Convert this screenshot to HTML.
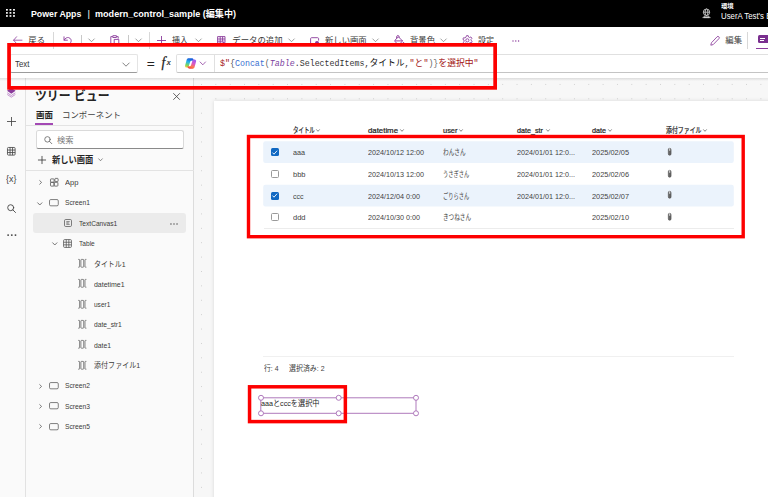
<!DOCTYPE html>
<html lang="ja">
<head>
<meta charset="utf-8">
<title>Power Apps</title>
<style>
*{box-sizing:border-box;margin:0;padding:0}
html,body{width:768px;height:497px;overflow:hidden;background:#fff}
body{font-family:"Liberation Sans","Noto Sans CJK JP",sans-serif;color:#333;position:relative;font-size:8px}
.a{position:absolute}
.t{position:absolute;white-space:nowrap;transform-origin:0 50%}
#topbar{left:0;top:0;width:768px;height:27px;background:#000}
#cmd{left:0;top:27px;width:768px;height:28px;background:#fff;border-bottom:1px solid #e9e9e9}
#fbar{left:0;top:54px;width:768px;height:24.2px;background:#fff}
#rail{left:0;top:78px;width:26px;height:419px;background:#fafafa;border-right:1px solid #e2e2e2}
#tree{left:26px;top:78px;width:168px;height:419px;background:#fafafa;border-right:1px solid #dcdcdc}
#stage{left:194px;top:78px;width:574px;height:419px;background-color:#f7f7f7;
 background-image:radial-gradient(circle,#cfcfcf 0.55px,rgba(207,207,207,0) 0.9px);background-size:14.35px 14.4px;background-position:0.3px -0.8px}
#canvas{left:214px;top:101px;width:560px;height:400px;background:#fff;box-shadow:0 0 4px rgba(0,0,0,.13)}
.red{border:3.9px solid #fb0007;position:absolute}
.sep{position:absolute;width:1px;background:#d8d8d8}
.hl{position:absolute;height:1px;background:#e3e3e3}
svg{position:absolute;overflow:visible}
.rowbg{position:absolute;left:263.2px;width:470.6px;background:#ebf3fc;border-radius:2px}
.cb{position:absolute;width:8.2px;height:8.2px;border-radius:1.5px}
.cb.on{background:#1068c2}
.cb.off{border:0.85px solid #9a9a9a;background:#fff}
</style>
</head>
<body>
<div id="topbar" class="a"></div>
<div id="cmd" class="a"></div>
<div id="fbar" class="a"></div>
<div id="rail" class="a"></div>
<div id="tree" class="a"></div>
<div id="stage" class="a"></div>
<div class="a" style="left:0;top:78.2px;width:768px;height:2.600px;background:linear-gradient(rgba(0,0,0,.11),rgba(0,0,0,0))"></div>
<div id="canvas" class="a"></div>

<!-- top bar icons -->
<svg style="left:6.2px;top:9.2px" width="9" height="7.800" viewBox="0 0 8.4 7.6" preserveAspectRatio="none"><g fill="#fff">
<rect x="0" y="0" width="1.7" height="1.6"/><rect x="3.3" y="0" width="1.7" height="1.6"/><rect x="6.6" y="0" width="1.7" height="1.6"/>
<rect x="0" y="3" width="1.7" height="1.6"/><rect x="3.3" y="3" width="1.7" height="1.6"/><rect x="6.6" y="3" width="1.7" height="1.6"/>
<rect x="0" y="6" width="1.7" height="1.6"/><rect x="3.3" y="6" width="1.7" height="1.6"/><rect x="6.6" y="6" width="1.7" height="1.6"/></g></svg>
<svg style="left:701px;top:8px" width="11" height="11" viewBox="0 0 11 11" fill="none" stroke="#ddd" stroke-width="0.8">
<circle cx="5.5" cy="4.2" r="3.2"/><ellipse cx="5.5" cy="4.2" rx="1.4" ry="3.2"/><path d="M2.3 4.2h6.4M1.5 9.6h8M3 8.2h5v1.4H3z"/></svg>

<!-- command bar icons -->
<svg style="left:12.7px;top:36.3px" width="9.4" height="8.4" viewBox="0 0 12 9" preserveAspectRatio="none" fill="none" stroke="#8a3a9b" stroke-width="0.9" stroke-linecap="round" stroke-linejoin="round"><path d="M11.5 4.5H0.8M4.6 0.8L0.8 4.5l3.8 3.7"/></svg>
<div class="sep" style="left:53px;top:32px;height:17px"></div>
<svg style="left:63px;top:35.5px" width="9" height="9" viewBox="0 0 9 9" fill="none" stroke="#8a3a9b" stroke-width="0.9" stroke-linecap="round" stroke-linejoin="round"><path d="M1 0.8v3.4h3.4M1.2 4C2.2 2.2 4 1.2 5.6 1.6c2 .5 3 2.4 2.4 4.2C7.6 7 6.6 7.9 5 8.5"/></svg>
<div class="sep" style="left:81px;top:35px;height:11px;background:#c8c8c8"></div>
<svg style="left:87.5px;top:37.6px" width="7" height="4.4" viewBox="0 0 8 5" fill="none" stroke="#777" stroke-width="0.8"><path d="M0.5 0.7L4 4.2 7.5 0.7"/></svg>
<svg style="left:110px;top:35px" width="9.5" height="11" viewBox="0 0 9.5 11" fill="none" stroke="#8a3a9b" stroke-width="0.9" stroke-linejoin="round"><path d="M2.6 1.6H0.8v8.6h3M6.6 1.6h1.6v2M2.8 0.7h3.6v1.8H2.8zM4.2 4.4h4.6v6H4.2z"/></svg>
<div class="sep" style="left:128px;top:35px;height:11px;background:#c8c8c8"></div>
<svg style="left:134.5px;top:37.6px" width="7" height="4.4" viewBox="0 0 8 5" fill="none" stroke="#777" stroke-width="0.8"><path d="M0.5 0.7L4 4.2 7.5 0.7"/></svg>
<div class="sep" style="left:149px;top:32px;height:17px"></div>
<svg style="left:157px;top:36px" width="9" height="9" viewBox="0 0 9 9" fill="none" stroke="#8a3a9b" stroke-width="0.9" stroke-linecap="round"><path d="M4.5 0.4v8.2M0.4 4.5h8.2"/></svg>
<svg style="left:194.5px;top:37.6px" width="7" height="4.4" viewBox="0 0 8 5" fill="none" stroke="#777" stroke-width="0.8"><path d="M0.5 0.7L4 4.2 7.5 0.7"/></svg>
<svg style="left:217.2px;top:35.6px" width="9" height="10" viewBox="0 0 9 10" fill="none" stroke="#8a3a9b" stroke-width="0.9" stroke-linejoin="round"><path d="M0.6 0.6h7.4v6.6H0.6zM0.6 3h7.400M0.600 5.200h7.400M3.200 0.600v6.600M5.600 0.600v6.600"/><circle cx="6.800" cy="7.600" r="2" fill="#8a3a9b" stroke="#fff" stroke-width="0.600"/></svg>
<svg style="left:287.8px;top:37.6px" width="7" height="4.4" viewBox="0 0 8 5" fill="none" stroke="#777" stroke-width="0.8"><path d="M0.5 0.7L4 4.2 7.5 0.7"/></svg>
<svg style="left:310.3px;top:36.5px" width="9.5" height="8.5" viewBox="0 0 9.5 8.5" fill="none" stroke="#8a3a9b" stroke-width="0.9" stroke-linejoin="round"><path d="M8.6 3.6V1.6c0-.5-.4-.9-.9-.9H1.5c-.5 0-.9.4-.9.9v4.6c0 .5.4.9.9.9h3"/><circle cx="7" cy="6" r="2" fill="#8a3a9b" stroke="none"/></svg>
<svg style="left:372px;top:37.6px" width="7" height="4.4" viewBox="0 0 8 5" fill="none" stroke="#777" stroke-width="0.8"><path d="M0.5 0.7L4 4.2 7.5 0.7"/></svg>
<svg style="left:393.5px;top:34.8px" width="10.500" height="10.500" viewBox="0 0 10.500 10.500" fill="none" stroke="#8a3a9b" stroke-width="0.900" stroke-linejoin="round"><path d="M4.400 1.800L8.600 6 5.400 9.200c-.5.500-1.200.5-1.700 0L1.200 6.700c-.5-.5-.5-1.200 0-1.700zM2.600 3.600V1.900c0-.8.600-1.400 1.300-1.400s1.300.6 1.300 1.400v.8M1 5.900h7.500M9.500 7.200c.5.800.7 1.200.7 1.700a.8.800 0 01-1.500 0c0-.5.300-.9.800-1.700z"/></svg>
<svg style="left:440.3px;top:37.6px" width="7" height="4.4" viewBox="0 0 8 5" fill="none" stroke="#777" stroke-width="0.8"><path d="M0.5 0.7L4 4.2 7.5 0.7"/></svg>
<svg style="left:461.9px;top:35px" width="10.700" height="10.700" viewBox="0 0 10 10" fill="none" stroke="#8a3a9b" stroke-width="0.9" stroke-linejoin="round"><circle cx="5" cy="5" r="1.5" stroke-width="0.8"/><path stroke-width="0.8" d="M4.2 0.6h1.6l.3 1.3 1 .5 1.2-.6 1 1.3-.9 1 .1 1 1 .8-.7 1.5-1.3-.3-.8.7-.1 1.3H4.9l-.5-1.2-1-.4-1.2.6-1-1.3.8-1-.1-1.1-1.1-.7.7-1.5 1.3.3.9-.7z"/></svg>
<svg style="left:512px;top:39.6px" width="8" height="2" viewBox="0 0 8 2" fill="#8a3a9b"><circle cx="1" cy="1" r="0.7"/><circle cx="3.8" cy="1" r="0.7"/><circle cx="6.6" cy="1" r="0.7"/></svg>
<svg style="left:710.3px;top:35.5px" width="10" height="10" viewBox="0 0 10 10" fill="none" stroke="#8a3a9b" stroke-width="0.85" stroke-linejoin="round"><path d="M7 0.9a1.2 1.2 0 011.9 0 1.2 1.2 0 010 1.8L3.2 8.6 0.8 9.2l.6-2.4z"/></svg>
<div class="sep" style="left:746.8px;top:32px;height:17px"></div>
<div class="a" style="left:757.7px;top:35px;width:12px;height:8.4px;background:#7a2f8f;border-radius:1.5px"></div>
<div class="a" style="left:760px;top:37.6px;width:5px;height:1px;background:#fff"></div>
<div class="a" style="left:760px;top:39.8px;width:3.5px;height:1px;background:#fff"></div>
<div class="a" style="left:756.3px;top:47.6px;width:12px;height:1.5px;background:#8a3a9b"></div>

<!-- formula bar -->
<div class="a" style="left:9.5px;top:54.2px;width:128.2px;height:18.6px;border:1px solid #e4e4e4;border-bottom:1px solid #9c9c9c;border-radius:2px;background:#fff"></div>
<svg style="left:121.7px;top:61.5px" width="8" height="5" viewBox="0 0 8 5" fill="none" stroke="#666" stroke-width="0.8"><path d="M0.5 0.7L4 4.2 7.5 0.7"/></svg>
<div class="a" style="left:176.1px;top:54px;width:600px;height:18.800px;border:1px solid #e0e0e0;border-bottom:1px solid #c4c4c4;border-radius:2px;background:#fff"></div>
<svg style="left:184.8px;top:58.1px" width="11.2" height="11" viewBox="0 0 11.2 11"><defs>
<linearGradient id="cgL" x1="0.3" y1="0" x2="0" y2="1"><stop offset="0" stop-color="#1b62dd"/><stop offset="0.35" stop-color="#25b7ea"/><stop offset="0.7" stop-color="#7fd65a"/><stop offset="1" stop-color="#ffd43a"/></linearGradient>
<linearGradient id="cgR" x1="0.7" y1="0" x2="0.3" y2="1"><stop offset="0" stop-color="#9a5cf2"/><stop offset="0.4" stop-color="#d957c8"/><stop offset="0.75" stop-color="#ff7a4a"/><stop offset="1" stop-color="#f0403c"/></linearGradient></defs>
<path d="M3.6 0.3h3c1 0 1.700.5 2 1.400l.3 1H6.700c-.8 0-1.400.5-1.600 1.300L3.800 8.300c-.2.800-.9 1.300-1.700 1.300h-.5C.5 9.600-.2 8.600.1 7.500l1.500-5.500C1.900 1 2.600.3 3.600.3z" fill="url(#cgL)"/>
<path d="M7.600 10.700h-3c-1 0-1.700-.5-2-1.400l-.3-1h2.200c.8 0 1.400-.5 1.600-1.300l1.300-4.300c.2-.8.900-1.300 1.700-1.300h.5c1.100 0 1.800 1 1.500 2.100L9.600 9c-.3 1-1 1.700-2 1.700z" fill="url(#cgR)"/>
</svg>
<svg style="left:199.2px;top:61.2px" width="7.600" height="4.800" viewBox="0 0 7 5" fill="none" stroke="#8a3a9b" stroke-width="0.8"><path d="M0.4 0.7L3.5 4 6.6 0.7"/></svg>
<div class="sep" style="left:214px;top:54.6px;height:17px;background:#e0e0e0"></div>

<!-- rail icons -->
<svg style="left:7px;top:88.2px" width="8.6" height="9.4" viewBox="0 0 11 9" preserveAspectRatio="none"><path d="M5.5 0L11 2.700 5.500 5.400 0 2.700z" fill="#8a3a9b"/><path d="M0.300 4.600L5.500 7.200l5.200-2.600M0.300 6.200L5.500 8.800l5.200-2.600" fill="none" stroke="#b77fc4" stroke-width="0.9"/></svg>
<svg style="left:6.5px;top:117px" width="9" height="9" viewBox="0 0 9 9" fill="none" stroke="#444" stroke-width="0.85" stroke-linecap="round"><path d="M4.500 0.400v8.200M0.400 4.500h8.200"/></svg>
<svg style="left:7.2px;top:146.8px" width="8.600" height="8.600" viewBox="0 0 9 9" fill="none" stroke="#444" stroke-width="0.85"><rect x="0.500" y="0.500" width="8" height="8" rx="1"/><path d="M0.500 3.200h8M0.500 5.800h8M3.200 0.500v8M5.800 0.500v8"/></svg>
<svg style="left:6.7px;top:203.700px" width="9" height="9" viewBox="0 0 9 9" fill="none" stroke="#444" stroke-width="0.9" stroke-linecap="round"><circle cx="3.700" cy="3.700" r="3"/><path d="M5.900 5.900L8.500 8.500"/></svg>
<svg style="left:6.5px;top:233.7px" width="9.6" height="2.2" viewBox="0 0 9.6 2.2" fill="#444"><circle cx="1.1" cy="1.1" r="0.95"/><circle cx="4.8" cy="1.1" r="0.95"/><circle cx="8.500" cy="1.100" r="0.950"/></svg>

<!-- tree pane -->
<svg style="left:172.9px;top:92.9px" width="7.2" height="7" viewBox="0 0 7 7" fill="none" stroke="#444" stroke-width="0.85" stroke-linecap="round"><path d="M0.500 0.500l6 6M6.500 0.500l-6 6"/></svg>
<div class="a" style="left:35.300px;top:123.200px;width:18.200px;height:1.500px;background:#a349b4"></div>
<div class="hl" style="left:26px;top:125px;width:168px"></div>
<div class="a" style="left:36.3px;top:130.4px;width:147.5px;height:18.8px;border:1px solid #dadada;border-bottom:1px solid #8a8a8a;border-radius:2.500px;background:#fff"></div>
<svg style="left:44px;top:135.6px" width="8.4" height="8.2" viewBox="0 0 9 9" fill="none" stroke="#666" stroke-width="0.9" stroke-linecap="round"><circle cx="3.700" cy="3.700" r="3"/><path d="M5.900 5.900L8.500 8.500"/></svg>
<svg style="left:38px;top:155.500px" width="8" height="8" viewBox="0 0 9 9" fill="none" stroke="#333" stroke-width="0.9" stroke-linecap="round"><path d="M4.500 0.400v8.200M0.400 4.500h8.200"/></svg>
<svg style="left:97.500px;top:158px" width="5" height="3.500" viewBox="0 0 6 4" fill="none" stroke="#555" stroke-width="0.800"><path d="M0.500 0.500L3 3.200 5.500 0.500"/></svg>
<div class="hl" style="left:26px;top:169.500px;width:168px"></div>
<div class="a" style="left:33px;top:212.9px;width:152.500px;height:19.8px;background:#ebebeb;border-radius:3px"></div>
<svg style="left:39.0px;top:180.1px" width="3" height="4.8" viewBox="0 0 3.5 5.6" fill="none" stroke="#555" stroke-width="0.9"><path d="M0.5 0.4L3 2.8 0.5 5.2"/></svg>
<svg style="left:49.5px;top:178.2px" width="8.6" height="8.6" viewBox="0 0 8.6 8.6" fill="none" stroke="#555" stroke-width="0.8"><rect x="0.5" y="0.9" width="3.6" height="3.4" rx="0.6"/><rect x="0.5" y="4.3" width="3.6" height="3.8" rx="0.6"/><rect x="4.1" y="4.3" width="3.8" height="3.8" rx="0.6"/><rect x="4.9" y="0.4" width="3.2" height="3.2" rx="0.6"/></svg>
<svg style="left:37.4px;top:201.6px" width="5.6" height="3.5" viewBox="0 0 5.6 3.5" fill="none" stroke="#555" stroke-width="0.8"><path d="M0.4 0.5L2.8 3 5.2 0.5"/></svg>
<svg style="left:49.0px;top:198.9px" width="9.8" height="7.4" viewBox="0 0 9.4 7" fill="none" stroke="#555" stroke-width="0.72"><rect x="0.5" y="0.5" width="8.4" height="6" rx="1.2"/></svg>
<svg style="left:63.6px;top:219.1px" width="8" height="8" viewBox="0 0 8 8" fill="none" stroke="#555" stroke-width="0.75"><rect x="0.5" y="0.5" width="7" height="7" rx="1.2"/><path d="M2.3 2.7h3.4M2.3 4h2.4M2.3 5.3h3.4"/></svg>
<svg style="left:170.0px;top:222.5px" width="8" height="1.8" viewBox="0 0 7 1.6" fill="#555"><circle cx="0.8" cy="0.8" r="0.68"/><circle cx="3.500" cy="0.800" r="0.680"/><circle cx="6.200" cy="0.800" r="0.680"/></svg>
<svg style="left:51.9px;top:242.2px" width="5.6" height="3.5" viewBox="0 0 5.6 3.5" fill="none" stroke="#555" stroke-width="0.8"><path d="M0.4 0.5L2.8 3 5.2 0.5"/></svg>
<svg style="left:63.2px;top:239.0px" width="9" height="9" viewBox="0 0 8 8" fill="none" stroke="#555" stroke-width="0.7"><rect x="0.5" y="0.5" width="7" height="7" rx="1"/><path d="M0.5 2.9h7M0.5 5.2h7M2.9 0.5v7M5.2 0.5v7"/></svg>
<svg style="left:77.9px;top:259.1px" width="8.6" height="8.6" viewBox="0 0 8.6 8.6" fill="none" stroke="#555" stroke-width="0.7"><path d="M0.2 0.4h0.9a0.5 0.5 0 0 1 0.5 0.5v6.8a0.5 0.5 0 0 1 -0.500 0.500h-0.900M8.400 0.400h-0.900a0.500 0.500 0 0 0 -0.500 0.500v6.800a0.500 0.500 0 0 0 0.500 0.500h0.900"/><rect x="2.900" y="0.400" width="2.800" height="7.800" rx="0.600"/></svg>
<svg style="left:77.9px;top:279.4px" width="8.6" height="8.6" viewBox="0 0 8.6 8.6" fill="none" stroke="#555" stroke-width="0.7"><path d="M0.2 0.4h0.9a0.5 0.5 0 0 1 0.5 0.5v6.8a0.5 0.5 0 0 1 -0.500 0.500h-0.900M8.400 0.400h-0.900a0.500 0.500 0 0 0 -0.500 0.500v6.800a0.500 0.500 0 0 0 0.500 0.500h0.900"/><rect x="2.900" y="0.400" width="2.800" height="7.800" rx="0.600"/></svg>
<svg style="left:77.9px;top:299.8px" width="8.6" height="8.6" viewBox="0 0 8.6 8.6" fill="none" stroke="#555" stroke-width="0.7"><path d="M0.2 0.4h0.9a0.5 0.5 0 0 1 0.5 0.5v6.8a0.5 0.5 0 0 1 -0.500 0.500h-0.900M8.400 0.400h-0.900a0.500 0.500 0 0 0 -0.500 0.500v6.800a0.500 0.500 0 0 0 0.500 0.500h0.900"/><rect x="2.900" y="0.400" width="2.800" height="7.800" rx="0.600"/></svg>
<svg style="left:77.9px;top:320.1px" width="8.6" height="8.6" viewBox="0 0 8.6 8.6" fill="none" stroke="#555" stroke-width="0.7"><path d="M0.2 0.4h0.9a0.5 0.5 0 0 1 0.5 0.5v6.8a0.5 0.5 0 0 1 -0.500 0.500h-0.900M8.400 0.400h-0.900a0.500 0.500 0 0 0 -0.500 0.500v6.800a0.500 0.500 0 0 0 0.500 0.500h0.900"/><rect x="2.900" y="0.400" width="2.800" height="7.800" rx="0.600"/></svg>
<svg style="left:77.9px;top:340.4px" width="8.6" height="8.6" viewBox="0 0 8.6 8.6" fill="none" stroke="#555" stroke-width="0.7"><path d="M0.2 0.4h0.9a0.5 0.5 0 0 1 0.5 0.5v6.8a0.5 0.5 0 0 1 -0.500 0.500h-0.900M8.400 0.400h-0.900a0.500 0.500 0 0 0 -0.500 0.500v6.800a0.500 0.500 0 0 0 0.500 0.500h0.900"/><rect x="2.900" y="0.400" width="2.800" height="7.800" rx="0.600"/></svg>
<svg style="left:77.9px;top:360.8px" width="8.6" height="8.6" viewBox="0 0 8.6 8.6" fill="none" stroke="#555" stroke-width="0.7"><path d="M0.2 0.4h0.9a0.5 0.5 0 0 1 0.5 0.5v6.8a0.5 0.5 0 0 1 -0.500 0.500h-0.900M8.400 0.400h-0.900a0.500 0.500 0 0 0 -0.500 0.500v6.800a0.500 0.500 0 0 0 0.500 0.500h0.900"/><rect x="2.900" y="0.400" width="2.800" height="7.800" rx="0.600"/></svg>
<svg style="left:38.6px;top:383.6px" width="3" height="4.8" viewBox="0 0 3.5 5.6" fill="none" stroke="#555" stroke-width="0.9"><path d="M0.5 0.4L3 2.8 0.5 5.2"/></svg>
<svg style="left:48.8px;top:382.0px" width="9.8" height="7.4" viewBox="0 0 9.4 7" fill="none" stroke="#555" stroke-width="0.72"><rect x="0.5" y="0.5" width="8.4" height="6" rx="1.2"/></svg>
<svg style="left:38.6px;top:403.9px" width="3" height="4.8" viewBox="0 0 3.5 5.6" fill="none" stroke="#555" stroke-width="0.9"><path d="M0.5 0.4L3 2.8 0.5 5.2"/></svg>
<svg style="left:48.8px;top:402.3px" width="9.8" height="7.4" viewBox="0 0 9.4 7" fill="none" stroke="#555" stroke-width="0.72"><rect x="0.5" y="0.5" width="8.4" height="6" rx="1.2"/></svg>
<svg style="left:38.6px;top:424.3px" width="3" height="4.8" viewBox="0 0 3.5 5.6" fill="none" stroke="#555" stroke-width="0.9"><path d="M0.5 0.4L3 2.8 0.5 5.2"/></svg>
<svg style="left:48.8px;top:422.7px" width="9.8" height="7.4" viewBox="0 0 9.4 7" fill="none" stroke="#555" stroke-width="0.72"><rect x="0.5" y="0.5" width="8.4" height="6" rx="1.2"/></svg>

<!-- canvas table -->
<svg style="left:0;top:0" width="768" height="497" viewBox="0 0 768 497" fill="#ebf3fc"><rect x="263.2" y="141.2" width="470.6" height="21.7" rx="2.2"/><rect x="263.2" y="184.7" width="470.6" height="21.75" rx="2.2"/></svg>
<div class="hl" style="left:263.500px;top:228px;width:470px;background:#ececec"></div>
<div class="hl" style="left:262.500px;top:355.800px;width:471px;background:#f0f0f0"></div>
<svg style="left:316.1px;top:128.8px" width="4" height="2.800" viewBox="0 0 4 2.800" fill="none" stroke="#555" stroke-width="0.700"><path d="M0.300 0.400L2 2.300 3.700 0.400"/></svg>
<svg style="left:400.1px;top:128.8px" width="4" height="2.800" viewBox="0 0 4 2.800" fill="none" stroke="#555" stroke-width="0.700"><path d="M0.300 0.400L2 2.300 3.700 0.400"/></svg>
<svg style="left:459.1px;top:128.8px" width="4" height="2.800" viewBox="0 0 4 2.800" fill="none" stroke="#555" stroke-width="0.700"><path d="M0.300 0.400L2 2.300 3.700 0.400"/></svg>
<svg style="left:545.5px;top:128.8px" width="4" height="2.800" viewBox="0 0 4 2.800" fill="none" stroke="#555" stroke-width="0.700"><path d="M0.300 0.400L2 2.300 3.700 0.400"/></svg>
<svg style="left:607.9px;top:128.8px" width="4" height="2.800" viewBox="0 0 4 2.800" fill="none" stroke="#555" stroke-width="0.700"><path d="M0.300 0.400L2 2.300 3.700 0.400"/></svg>
<svg style="left:703.4px;top:128.8px" width="4" height="2.800" viewBox="0 0 4 2.800" fill="none" stroke="#555" stroke-width="0.700"><path d="M0.300 0.400L2 2.300 3.700 0.400"/></svg>
<div class="cb on" style="left:271.2px;top:148.2px"></div><svg style="left:272.4px;top:149.9px" width="5.600" height="5" viewBox="0 0 5.600 5" fill="none" stroke="#fff" stroke-width="0.900"><path d="M0.500 2.600L2 4.200 5.100 0.700"/></svg>
<svg style="left:667.8px;top:147.7px" width="3.400" height="7.600" viewBox="0 0 3.400 7.600"><rect x="0.300" y="0.300" width="2.800" height="7" rx="1.400" fill="#666" stroke="#444" stroke-width="0.500"/><rect x="1.200" y="0.300" width="1" height="2.500" fill="#ddd"/></svg>
<div class="cb off" style="left:271.2px;top:170.0px"></div>
<svg style="left:667.8px;top:169.5px" width="3.400" height="7.600" viewBox="0 0 3.400 7.600"><rect x="0.300" y="0.300" width="2.800" height="7" rx="1.400" fill="#666" stroke="#444" stroke-width="0.500"/><rect x="1.200" y="0.300" width="1" height="2.500" fill="#ddd"/></svg>
<div class="cb on" style="left:271.2px;top:191.5px"></div><svg style="left:272.4px;top:193.2px" width="5.600" height="5" viewBox="0 0 5.600 5" fill="none" stroke="#fff" stroke-width="0.900"><path d="M0.500 2.600L2 4.200 5.100 0.700"/></svg>
<svg style="left:667.8px;top:191.0px" width="3.400" height="7.600" viewBox="0 0 3.400 7.600"><rect x="0.300" y="0.300" width="2.800" height="7" rx="1.400" fill="#666" stroke="#444" stroke-width="0.500"/><rect x="1.200" y="0.300" width="1" height="2.500" fill="#ddd"/></svg>
<div class="cb off" style="left:271.2px;top:213.3px"></div>
<svg style="left:667.8px;top:212.8px" width="3.400" height="7.600" viewBox="0 0 3.400 7.600"><rect x="0.300" y="0.300" width="2.800" height="7" rx="1.400" fill="#666" stroke="#444" stroke-width="0.500"/><rect x="1.200" y="0.300" width="1" height="2.500" fill="#ddd"/></svg>

<!-- selection box -->
<svg style="left:0;top:0" width="768" height="497" viewBox="0 0 768 497" fill="#fff" stroke="#a66bb4" stroke-width="0.9">
<path d="M260.800 397.800H416V413.300H260.800z" fill="none"/>
<circle cx="261" cy="397.800" r="2.5"/><circle cx="261" cy="413.300" r="2.5"/>
<circle cx="338.700" cy="397.800" r="2.5"/><circle cx="338.700" cy="413.300" r="2.5"/>
<circle cx="416" cy="397.800" r="2.5"/><circle cx="416" cy="413.300" r="2.5"/>
</svg>

<div class="t" style="left:30.7px;top:7.28px;font-size:9.6px;line-height:13.44px;color:#fff;font-weight:bold;font-family:'Liberation Sans','Noto Sans CJK JP',sans-serif;transform:scaleX(0.9130);">Power Apps</div>
<div class="t" style="left:87.5px;top:6.78px;font-size:9.6px;line-height:13.44px;color:#fff;font-weight:normal;font-family:'Liberation Sans','Noto Sans CJK JP',sans-serif;">|</div>
<div class="t" style="left:95px;top:7.28px;font-size:9.6px;line-height:13.44px;color:#fff;font-weight:bold;font-family:'Liberation Sans','Noto Sans CJK JP',sans-serif;transform:scaleX(0.9446);">modern_control_sample (編集中)</div>
<div class="t" style="left:721.2px;top:2.1px;font-size:6px;line-height:8.4px;color:#fff;font-weight:bold;font-family:'Liberation Sans','Noto Sans CJK JP',sans-serif;transform:scaleX(1.0486);">環境</div>
<div class="t" style="left:721.3px;top:9.68px;font-size:8.6px;line-height:12.04px;color:#fff;font-weight:normal;font-family:'Liberation Sans','Noto Sans CJK JP',sans-serif;transform:scaleX(0.9085);">UserA Test's Environment</div>
<div class="t" style="left:28.3px;top:34.62px;font-size:8.4px;line-height:11.76px;color:#3b3a39;font-weight:normal;font-family:'Liberation Sans','Noto Sans CJK JP',sans-serif;">戻る</div>
<div class="t" style="left:172.3px;top:34.62px;font-size:8.4px;line-height:11.76px;color:#3b3a39;font-weight:normal;font-family:'Liberation Sans','Noto Sans CJK JP',sans-serif;transform:scaleX(0.9552);">挿入</div>
<div class="t" style="left:232.3px;top:34.62px;font-size:8.4px;line-height:11.76px;color:#3b3a39;font-weight:normal;font-family:'Liberation Sans','Noto Sans CJK JP',sans-serif;">データの追加</div>
<div class="t" style="left:325.3px;top:34.62px;font-size:8.4px;line-height:11.76px;color:#3b3a39;font-weight:normal;font-family:'Liberation Sans','Noto Sans CJK JP',sans-serif;transform:scaleX(0.9958);">新しい画面</div>
<div class="t" style="left:410px;top:34.62px;font-size:8.4px;line-height:11.76px;color:#3b3a39;font-weight:normal;font-family:'Liberation Sans','Noto Sans CJK JP',sans-serif;transform:scaleX(0.9950);">背景色</div>
<div class="t" style="left:478.3px;top:34.62px;font-size:8.4px;line-height:11.76px;color:#3b3a39;font-weight:normal;font-family:'Liberation Sans','Noto Sans CJK JP',sans-serif;transform:scaleX(0.9552);">設定</div>
<div class="t" style="left:725.3px;top:34.62px;font-size:8.4px;line-height:11.76px;color:#3b3a39;font-weight:normal;font-family:'Liberation Sans','Noto Sans CJK JP',sans-serif;">編集</div>
<div class="t" style="left:15px;top:59.06px;font-size:8.2px;line-height:11.48px;color:#333;font-weight:normal;font-family:'Liberation Sans','Noto Sans CJK JP',sans-serif;transform:scaleX(0.9523);">Text</div>
<div class="t" style="left:146.5px;top:55.55px;font-size:12.5px;line-height:17.5px;color:#222;font-weight:normal;font-family:'Liberation Sans','Noto Sans CJK JP',sans-serif;transform:scaleX(1.0393);-webkit-text-stroke:0.25px #222;">=</div>
<div class="t" style="left:161.5px;top:53.38px;font-size:13.6px;line-height:19.04px;color:#1a1a1a;font-weight:normal;font-family:'Liberation Serif',serif;font-style:italic;-webkit-text-stroke:0.25px #1a1a1a;">f</div>
<div class="t" style="left:166.8px;top:56.24px;font-size:8.8px;line-height:12.32px;color:#1a1a1a;font-weight:normal;font-family:'Liberation Serif',serif;font-style:italic;-webkit-text-stroke:0.2px #1a1a1a;">x</div>
<div class="t" style="left:220px;top:58.49px;font-size:8.3px;line-height:11.62px;color:#333;font-weight:normal;font-family:'Liberation Mono','Noto Sans CJK JP',monospace;"><span style="color:#a31515">$"</span><span style="color:#555">{</span><span style="color:#3a6fd0">Concat</span><span style="color:#666">(</span><span style="color:#7b3fa0;font-style:italic">Table</span><span style="color:#333">.SelectedItems,</span><span style="color:#111;font-size:8.8px">タイトル</span><span style="color:#333">,</span><span style="color:#a31515">"<span style="font-size:8.8px">と</span>"</span><span style="color:#666">)}</span><span style="color:#a31515"><span style="font-size:8.8px">を選択中</span>"</span></div>
<div class="t" style="left:6.1px;top:173.28px;font-size:8.6px;line-height:12.04px;color:#444;font-weight:normal;font-family:'Liberation Sans','Noto Sans CJK JP',sans-serif;transform:scaleX(1.0351);">{x}</div>
<div class="t" style="left:35.2px;top:88.08px;font-size:12.6px;line-height:17.64px;color:#242424;font-weight:bold;font-family:'Liberation Sans','Noto Sans CJK JP',sans-serif;transform:scaleX(0.9423);">ツリー ビュー</div>
<div class="t" style="left:36px;top:110.36px;font-size:8.2px;line-height:11.48px;color:#242424;font-weight:bold;font-family:'Liberation Sans','Noto Sans CJK JP',sans-serif;transform:scaleX(1.0372);">画面</div>
<div class="t" style="left:61.8px;top:110.36px;font-size:8.2px;line-height:11.48px;color:#424242;font-weight:normal;font-family:'Liberation Sans','Noto Sans CJK JP',sans-serif;transform:scaleX(1.0292);">コンポーネント</div>
<div class="t" style="left:56.6px;top:134.96px;font-size:8.2px;line-height:11.48px;color:#7a7a7a;font-weight:normal;font-family:'Liberation Sans','Noto Sans CJK JP',sans-serif;transform:scaleX(1.0067);">検索</div>
<div class="t" style="left:52.2px;top:153.98px;font-size:8.6px;line-height:12.04px;color:#242424;font-weight:bold;font-family:'Liberation Sans','Noto Sans CJK JP',sans-serif;transform:scaleX(0.9631);">新しい画面</div>
<div class="t" style="left:65px;top:177.94px;font-size:7.8px;line-height:10.92px;color:#3b3a39;font-weight:normal;font-family:'Liberation Sans','Noto Sans CJK JP',sans-serif;transform:scaleX(0.9730);">App</div>
<div class="t" style="left:65px;top:198.27px;font-size:7.8px;line-height:10.92px;color:#3b3a39;font-weight:normal;font-family:'Liberation Sans','Noto Sans CJK JP',sans-serif;transform:scaleX(0.8607);">Screen1</div>
<div class="t" style="left:79.0px;top:218.6px;font-size:7.8px;line-height:10.92px;color:#3b3a39;font-weight:normal;font-family:'Liberation Sans','Noto Sans CJK JP',sans-serif;transform:scaleX(0.8496);">TextCanvas1</div>
<div class="t" style="left:79.0px;top:238.93px;font-size:7.8px;line-height:10.92px;color:#3b3a39;font-weight:normal;font-family:'Liberation Sans','Noto Sans CJK JP',sans-serif;transform:scaleX(0.8476);">Table</div>
<div class="t" style="left:93.7px;top:259.76px;font-size:7.8px;line-height:10.92px;color:#3b3a39;font-weight:normal;font-family:'Liberation Sans','Noto Sans CJK JP',sans-serif;transform:scaleX(0.8894);">タイトル1</div>
<div class="t" style="left:93.8px;top:279.59px;font-size:7.8px;line-height:10.92px;color:#3b3a39;font-weight:normal;font-family:'Liberation Sans','Noto Sans CJK JP',sans-serif;transform:scaleX(0.8934);">datetime1</div>
<div class="t" style="left:93.8px;top:299.92px;font-size:7.8px;line-height:10.92px;color:#3b3a39;font-weight:normal;font-family:'Liberation Sans','Noto Sans CJK JP',sans-serif;transform:scaleX(0.8352);">user1</div>
<div class="t" style="left:93.8px;top:320.25px;font-size:7.8px;line-height:10.92px;color:#3b3a39;font-weight:normal;font-family:'Liberation Sans','Noto Sans CJK JP',sans-serif;transform:scaleX(0.8550);">date_str1</div>
<div class="t" style="left:93.8px;top:340.58px;font-size:7.8px;line-height:10.92px;color:#3b3a39;font-weight:normal;font-family:'Liberation Sans','Noto Sans CJK JP',sans-serif;transform:scaleX(0.8711);">date1</div>
<div class="t" style="left:93.8px;top:360.91px;font-size:7.8px;line-height:10.92px;color:#3b3a39;font-weight:normal;font-family:'Liberation Sans','Noto Sans CJK JP',sans-serif;transform:scaleX(0.9037);">添付ファイル1</div>
<div class="t" style="left:64.6px;top:381.24px;font-size:7.8px;line-height:10.92px;color:#3b3a39;font-weight:normal;font-family:'Liberation Sans','Noto Sans CJK JP',sans-serif;transform:scaleX(0.8607);">Screen2</div>
<div class="t" style="left:64.6px;top:401.57px;font-size:7.8px;line-height:10.92px;color:#3b3a39;font-weight:normal;font-family:'Liberation Sans','Noto Sans CJK JP',sans-serif;transform:scaleX(0.8607);">Screen3</div>
<div class="t" style="left:64.6px;top:421.9px;font-size:7.8px;line-height:10.92px;color:#3b3a39;font-weight:normal;font-family:'Liberation Sans','Noto Sans CJK JP',sans-serif;transform:scaleX(0.8607);">Screen5</div>
<div class="t" style="left:292.6px;top:125.78px;font-size:7.6px;line-height:10.64px;color:#242424;font-weight:normal;font-family:'Liberation Sans','Noto Sans CJK JP',sans-serif;transform:scaleX(0.7177);-webkit-text-stroke:0.22px #242424;">タイトル</div>
<div class="t" style="left:368.2px;top:125.78px;font-size:7.6px;line-height:10.64px;color:#242424;font-weight:normal;font-family:'Liberation Sans','Noto Sans CJK JP',sans-serif;transform:scaleX(1.0295);-webkit-text-stroke:0.22px #242424;">datetime</div>
<div class="t" style="left:442.7px;top:125.78px;font-size:7.6px;line-height:10.64px;color:#242424;font-weight:normal;font-family:'Liberation Sans','Noto Sans CJK JP',sans-serif;transform:scaleX(0.9810);-webkit-text-stroke:0.22px #242424;">user</div>
<div class="t" style="left:517.3px;top:125.78px;font-size:7.6px;line-height:10.64px;color:#242424;font-weight:normal;font-family:'Liberation Sans','Noto Sans CJK JP',sans-serif;transform:scaleX(0.9434);-webkit-text-stroke:0.22px #242424;">date_str</div>
<div class="t" style="left:591.5px;top:125.78px;font-size:7.6px;line-height:10.64px;color:#242424;font-weight:normal;font-family:'Liberation Sans','Noto Sans CJK JP',sans-serif;transform:scaleX(0.9539);-webkit-text-stroke:0.22px #242424;">date</div>
<div class="t" style="left:666px;top:125.78px;font-size:7.6px;line-height:10.64px;color:#242424;font-weight:normal;font-family:'Liberation Sans','Noto Sans CJK JP',sans-serif;transform:scaleX(0.7791);-webkit-text-stroke:0.22px #242424;">添付ファイル</div>
<div class="t" style="left:292.6px;top:148.28px;font-size:7.6px;line-height:10.64px;color:#424242;font-weight:normal;font-family:'Liberation Sans','Noto Sans CJK JP',sans-serif;transform:scaleX(0.9470);">aaa</div>
<div class="t" style="left:368.2px;top:148.28px;font-size:7.6px;line-height:10.64px;color:#424242;font-weight:normal;font-family:'Liberation Sans','Noto Sans CJK JP',sans-serif;transform:scaleX(0.9488);">2024/10/12 12:00</div>
<div class="t" style="left:442.7px;top:148.28px;font-size:7.6px;line-height:10.64px;color:#424242;font-weight:normal;font-family:'Liberation Sans','Noto Sans CJK JP',sans-serif;transform:scaleX(0.7440);">わんさん</div>
<div class="t" style="left:517.3px;top:148.28px;font-size:7.6px;line-height:10.64px;color:#424242;font-weight:normal;font-family:'Liberation Sans','Noto Sans CJK JP',sans-serif;transform:scaleX(0.9472);">2024/01/01 12:0...</div>
<div class="t" style="left:591.5px;top:148.28px;font-size:7.6px;line-height:10.64px;color:#424242;font-weight:normal;font-family:'Liberation Sans','Noto Sans CJK JP',sans-serif;transform:scaleX(0.9733);">2025/02/05</div>
<div class="t" style="left:292.6px;top:170.08px;font-size:7.6px;line-height:10.64px;color:#424242;font-weight:normal;font-family:'Liberation Sans','Noto Sans CJK JP',sans-serif;transform:scaleX(0.9864);">bbb</div>
<div class="t" style="left:368.2px;top:170.08px;font-size:7.6px;line-height:10.64px;color:#424242;font-weight:normal;font-family:'Liberation Sans','Noto Sans CJK JP',sans-serif;transform:scaleX(0.9488);">2024/10/13 12:00</div>
<div class="t" style="left:442.7px;top:170.08px;font-size:7.6px;line-height:10.64px;color:#424242;font-weight:normal;font-family:'Liberation Sans','Noto Sans CJK JP',sans-serif;transform:scaleX(0.6900);">うさぎさん</div>
<div class="t" style="left:517.3px;top:170.08px;font-size:7.6px;line-height:10.64px;color:#424242;font-weight:normal;font-family:'Liberation Sans','Noto Sans CJK JP',sans-serif;transform:scaleX(0.9472);">2024/01/01 12:0...</div>
<div class="t" style="left:591.5px;top:170.08px;font-size:7.6px;line-height:10.64px;color:#424242;font-weight:normal;font-family:'Liberation Sans','Noto Sans CJK JP',sans-serif;transform:scaleX(0.9733);">2025/02/06</div>
<div class="t" style="left:292.6px;top:191.58px;font-size:7.6px;line-height:10.64px;color:#424242;font-weight:normal;font-family:'Liberation Sans','Noto Sans CJK JP',sans-serif;transform:scaleX(0.9218);">ccc</div>
<div class="t" style="left:368.2px;top:191.58px;font-size:7.6px;line-height:10.64px;color:#424242;font-weight:normal;font-family:'Liberation Sans','Noto Sans CJK JP',sans-serif;transform:scaleX(0.9489);">2024/12/04 0:00</div>
<div class="t" style="left:442.7px;top:191.58px;font-size:7.6px;line-height:10.64px;color:#424242;font-weight:normal;font-family:'Liberation Sans','Noto Sans CJK JP',sans-serif;transform:scaleX(0.6900);">ごりらさん</div>
<div class="t" style="left:517.3px;top:191.58px;font-size:7.6px;line-height:10.64px;color:#424242;font-weight:normal;font-family:'Liberation Sans','Noto Sans CJK JP',sans-serif;transform:scaleX(0.9472);">2024/01/01 12:0...</div>
<div class="t" style="left:591.5px;top:191.58px;font-size:7.6px;line-height:10.64px;color:#424242;font-weight:normal;font-family:'Liberation Sans','Noto Sans CJK JP',sans-serif;transform:scaleX(0.9733);">2025/02/07</div>
<div class="t" style="left:292.6px;top:213.38px;font-size:7.6px;line-height:10.64px;color:#424242;font-weight:normal;font-family:'Liberation Sans','Noto Sans CJK JP',sans-serif;transform:scaleX(0.9864);">ddd</div>
<div class="t" style="left:368.2px;top:213.38px;font-size:7.6px;line-height:10.64px;color:#424242;font-weight:normal;font-family:'Liberation Sans','Noto Sans CJK JP',sans-serif;transform:scaleX(0.9489);">2024/10/30 0:00</div>
<div class="t" style="left:442.7px;top:213.38px;font-size:7.6px;line-height:10.64px;color:#424242;font-weight:normal;font-family:'Liberation Sans','Noto Sans CJK JP',sans-serif;transform:scaleX(0.7374);">きつねさん</div>
<div class="t" style="left:591.5px;top:213.38px;font-size:7.6px;line-height:10.64px;color:#424242;font-weight:normal;font-family:'Liberation Sans','Noto Sans CJK JP',sans-serif;transform:scaleX(0.9733);">2025/02/10</div>
<div class="t" style="left:263.7px;top:363.58px;font-size:7.6px;line-height:10.64px;color:#424242;font-weight:normal;font-family:'Liberation Sans','Noto Sans CJK JP',sans-serif;transform:scaleX(0.9036);">行: 4</div>
<div class="t" style="left:289px;top:363.58px;font-size:7.6px;line-height:10.64px;color:#424242;font-weight:normal;font-family:'Liberation Sans','Noto Sans CJK JP',sans-serif;transform:scaleX(0.9143);">選択済み: 2</div>
<div class="t" style="left:260.8px;top:398.88px;font-size:7.6px;line-height:10.64px;color:#242424;font-weight:normal;font-family:'Liberation Sans','Noto Sans CJK JP',sans-serif;transform:scaleX(0.9431);">aaaとcccを選択中</div>

<svg style="left:0;top:0" width="768" height="497" viewBox="0 0 768 497" fill="none" stroke="#fd0000">
<rect x="9.05" y="44.85" width="486.1" height="43" stroke-width="3.7"/>
<rect x="248.5" y="136.5" width="494.7" height="100.2" stroke-width="3.4"/>
<rect x="249.55" y="386.8" width="95.8" height="34.8" stroke-width="3.5"/>
</svg>
</body>
</html>
